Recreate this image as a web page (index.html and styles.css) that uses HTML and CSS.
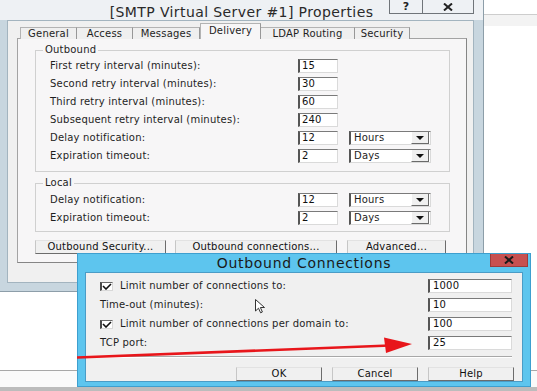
FILE: index.html
```html
<!DOCTYPE html>
<html lang="en">
<head>
<meta charset="utf-8">
<title>[SMTP Virtual Server #1] Properties</title>
<link rel="stylesheet" href="styles.css">
</head>
<body>
<div class="desk">
  <div class="bg-strip"></div>
  <div class="bg-bottom"><div class="bg-fill"></div><div class="bg-bar"></div></div>

  <div class="win-main">
    <div class="titlebar">
      <div class="title">[SMTP Virtual Server #1] Properties</div>
      <div class="tb-btns">
        <div class="tb-btn tb-help">?</div>
        <div class="tb-btn tb-close">
          <svg width="10" height="8" viewBox="0 0 10 8"><path d="M1 0.5 L9 7.5 M9 0.5 L1 7.5" stroke="#222" stroke-width="2"/></svg>
        </div>
      </div>
    </div>
    <div class="client">
      <div class="tabs">
        <div class="tab t-general">General</div>
        <div class="tab t-access">Access</div>
        <div class="tab t-messages">Messages</div>
        <div class="tab t-delivery active">Delivery</div>
        <div class="tab t-ldap">LDAP Routing</div>
        <div class="tab t-security">Security</div>
      </div>
      <div class="panel">
        <fieldset class="group g-outbound">
          <legend>Outbound</legend>
          <div class="rows">
            <div class="row"><span class="lbl">First retry interval (minutes):</span><span class="field">15</span></div>
            <div class="row"><span class="lbl">Second retry interval (minutes):</span><span class="field">30</span></div>
            <div class="row"><span class="lbl">Third retry interval (minutes):</span><span class="field">60</span></div>
            <div class="row"><span class="lbl">Subsequent retry interval (minutes):</span><span class="field">240</span></div>
            <div class="row"><span class="lbl">Delay notification:</span><span class="field">12</span><span class="select"><span class="sel-val">Hours</span><span class="sel-btn"><span class="tri"></span></span></span></div>
            <div class="row"><span class="lbl">Expiration timeout:</span><span class="field">2</span><span class="select"><span class="sel-val">Days</span><span class="sel-btn"><span class="tri"></span></span></span></div>
          </div>
        </fieldset>
        <fieldset class="group g-local">
          <legend>Local</legend>
          <div class="rows">
            <div class="row"><span class="lbl">Delay notification:</span><span class="field">12</span><span class="select"><span class="sel-val">Hours</span><span class="sel-btn"><span class="tri"></span></span></span></div>
            <div class="row"><span class="lbl">Expiration timeout:</span><span class="field">2</span><span class="select"><span class="sel-val">Days</span><span class="sel-btn"><span class="tri"></span></span></span></div>
          </div>
        </fieldset>
        <div class="btnrow">
          <div class="btn b-sec">Outbound Security...</div>
          <div class="btn b-conn">Outbound connections...</div>
          <div class="btn b-adv">Advanced...</div>
        </div>
      </div>
    </div>
  </div>

  <div class="win-dlg">
    <div class="dlg-titlebar">
      <div class="dlg-title">Outbound Connections</div>
      <div class="dlg-close">
        <svg width="10" height="8" viewBox="0 0 10 8"><path d="M1 0.5 L9 7.5 M9 0.5 L1 7.5" stroke="#1a1a1a" stroke-width="2"/></svg>
      </div>
    </div>
    <div class="dlg-client">
      <div class="drows">
        <div class="drow"><span class="dlbl"><span class="chk"><svg width="10" height="7" viewBox="0 0 10 7"><path d="M1 3 L4 6 L9 1" fill="none" stroke="#111" stroke-width="1.6"/></svg></span>Limit number of connections to:</span><span class="field dfield">1000</span></div>
        <div class="drow"><span class="dlbl">Time-out (minutes):</span><span class="field dfield">10</span></div>
        <div class="drow"><span class="dlbl"><span class="chk"><svg width="10" height="7" viewBox="0 0 10 7"><path d="M1 3 L4 6 L9 1" fill="none" stroke="#111" stroke-width="1.6"/></svg></span>Limit number of connections per domain to:</span><span class="field dfield">100</span></div>
        <div class="drow"><span class="dlbl">TCP port:</span><span class="field dfield">25</span></div>
      </div>
      <div class="sep"></div>
      <div class="dbtns">
        <div class="btn dbtn">OK</div>
        <div class="btn dbtn">Cancel</div>
        <div class="btn dbtn">Help</div>
      </div>
    </div>
  </div>

  <svg class="cursor" width="12" height="15" viewBox="0 0 12 15">
    <path d="M0.5 0.5 L0.5 12 L3.5 9.2 L5.6 13.8 L7.4 13 L5.4 8.5 L9.5 8.5 Z" fill="#fff" stroke="#333" stroke-width="1"/>
  </svg>

  <svg class="arrow" width="537" height="391" viewBox="0 0 537 391">
    <line x1="77" y1="357.5" x2="390" y2="345.5" stroke="#e8161b" stroke-width="2.6"/>
    <polygon points="412,344 384,337.5 386,353" fill="#e8161b"/>
  </svg>
</div>
</body>
</html>
```

FILE: styles.css
```css
* { box-sizing: border-box; }
html, body { margin: 0; padding: 0; }
body {
  width: 537px;
  height: 391px;
  overflow: hidden;
  background: #ffffff;
  font-family: "DejaVu Sans", "Liberation Sans", sans-serif;
  font-size: 10px;
  line-height: 12px;
  letter-spacing: 0.2px;
  color: #1e1e1e;
}
.desk { position: relative; width: 537px; height: 391px; }

/* background windows */
.bg-strip {
  position: absolute; left: 483px; top: 14px; width: 54px; height: 12px;
  border-top: 1px solid #cdcdcd; background: #f3f3f3;
}
.bg-bottom {
  position: absolute; left: 0; top: 370px; width: 537px; height: 21px;
  border-top: 1px solid #a8a8a8; display: flex; flex-direction: column;
}
.bg-fill { flex: 1; background: #fafafa; }
.bg-bar { height: 4px; background: #bcbcbc; }

/* main properties window */
.win-main {
  position: absolute; left: 0; top: 0; width: 484px; height: 292px;
  background: #c8d6df;
  border-right: 1px solid #8d9ea9; border-bottom: 1px solid #8d9ea9;
  display: flex; flex-direction: column;
}
.titlebar { height: 20px; background: #eef1f4; display: grid; }
.title, .tb-btns { grid-area: 1 / 1; }
.title {
  justify-self: center; font-size: 14px; letter-spacing: 0.4px;
  line-height: 16px; margin-top: 4px; color: #2a2a2a;
}
.tb-btns { justify-self: end; align-self: start; display: flex; margin-right: 9px; }
.tb-btn {
  height: 14px; border: 1px solid #6f7479; border-top: none;
  display: flex; align-items: center; justify-content: center;
  background: #eef1f4;
}
.tb-help { width: 34px; font-weight: bold; font-size: 11px; color: #222; }
.tb-close { width: 51px; border-left: none; }

.client {
  flex: 1; margin: 0 9px 8px 7px;
  background: #f0f0f0; border: 1px solid #a3b4bf;
  padding: 2px 6px 19px 9px;
  display: flex; flex-direction: column;
}
.tabs {
  display: flex; align-items: flex-end; height: 16px;
  margin-left: 3px; margin-bottom: -1px;
  position: relative; z-index: 2;
}
.tab {
  height: 12px; border-top: 1px solid #b3b3b3; border-right: 1px solid #979797;
  display: flex; align-items: center; justify-content: center;
  background: #efefef; line-height: 11px; white-space: nowrap;
}
.t-general { width: 57px; border-left: 1px solid #b3b3b3; }
.t-access { width: 56px; }
.t-messages { width: 67px; }
.t-delivery { width: 61px; }
.t-ldap { width: 94px; }
.t-security { width: 55px; }
.tab.active {
  height: 16px; background: #f7f6f7; border-left: 1px solid #b3b3b3;
  padding-bottom: 2px;
}

.panel {
  flex: 1; background: #f7f6f7;
  border: 1px solid #a3a3a3; border-right-color: #858585; border-bottom-color: #858585;
  padding: 5px 16px 0 17px;
  position: relative; z-index: 1;
}
.group { margin: 0; padding: 0 0 6px 0; border: 1px solid #d0d0d0; min-width: 0; }
.group legend { margin-left: 7px; padding: 0 2px; line-height: 12px; }
.rows { padding: 1px 0 0 14px; }
.g-local { margin-top: 5px; padding-bottom: 4px; }
.g-local .rows { padding-top: 2px; }
.row {
  display: grid; grid-template-columns: 237px 40px 82px; column-gap: 11px;
  height: 18px; align-items: center;
}
.lbl { white-space: nowrap; }
.field {
  height: 14px; background: #fff;
  border-style: solid; border-width: 1px 1px 1px 2px;
  border-color: #7a7a7a #dadada #dadada #555;
  padding-left: 2px; line-height: 12px; color: #111;
}
.select {
  height: 14px; background: #fff; display: flex;
  border-style: solid; border-width: 1px 1px 1px 2px;
  border-color: #7a7a7a #dadada #dadada #555;
}
.sel-val { flex: 1; padding-left: 3px; line-height: 12px; }
.sel-btn {
  width: 18px; background: #f0f0f0; margin-right: 1px;
  border-left: 1px solid #fff; border-right: 1px solid #6a6a6a; border-bottom: 1px solid #6a6a6a;
  display: flex; align-items: center; justify-content: center;
}
.tri {
  width: 0; height: 0;
  border-left: 4px solid transparent; border-right: 4px solid transparent;
  border-top: 4px solid #111;
}

.btnrow { display: flex; margin-top: 8px; }
.btn {
  height: 14px; background: #f0f0f0;
  border: 1px solid; border-color: #e2e2e2 #6c6c6c #6c6c6c #c6c6c6;
  display: flex; align-items: center; justify-content: center;
  line-height: 12px; white-space: nowrap; color: #111;
}
.b-sec { width: 131px; }
.b-conn { width: 162px; margin-left: 9px; }
.b-adv { width: 99px; margin-left: 10px; }

/* outbound connections dialog */
.win-dlg {
  position: absolute; left: 77px; top: 253px; width: 454px; height: 134px;
  background: #5dc5ee; border: 1px solid #3d9fcf;
  display: flex; flex-direction: column; z-index: 3;
}
.dlg-titlebar { height: 18px; display: grid; }
.dlg-title, .dlg-close { grid-area: 1 / 1; }
.dlg-title {
  justify-self: center; font-size: 14px; letter-spacing: 0.7px;
  line-height: 18px; color: #1a1a1a;
}
.dlg-close {
  justify-self: end; align-self: start; width: 38px; height: 13px; margin-right: 2px;
  background: #c75050; border: 1px solid #9c3b3b; border-top: none;
  display: flex; align-items: center; justify-content: center;
}
.dlg-client {
  flex: 1; margin: 0 7px 4px 7px;
  background: #f0f0f0; border: 1px solid #4a9cc6;
  padding: 6px 10px 0 14px;
}
.drows { display: flex; flex-direction: column; gap: 5px; }
.drow { display: grid; grid-template-columns: 1fr 84px; height: 14px; align-items: center; }
.dlbl { display: flex; align-items: center; gap: 7px; white-space: nowrap; }
.chk {
  width: 13px; height: 9px; background: #fff;
  border-style: solid; border-width: 1px 1px 1px 2px;
  border-color: #6a6a6a #d8d8d8 #d8d8d8 #4a4a4a;
  display: flex; align-items: center; justify-content: center;
}
.dfield { padding-left: 3px; }
.sep { margin-top: 6px; border-top: 1px solid #a8a8a8; border-bottom: 1px solid #ffffff; }
.dbtns { display: flex; justify-content: flex-end; gap: 10px; margin-top: 9px; margin-right: -2px; }
.dbtn { width: 86px; }

/* overlays */
.cursor { position: absolute; left: 255px; top: 299px; z-index: 5; }
.arrow { position: absolute; left: 0; top: 0; z-index: 6; pointer-events: none; }
```
